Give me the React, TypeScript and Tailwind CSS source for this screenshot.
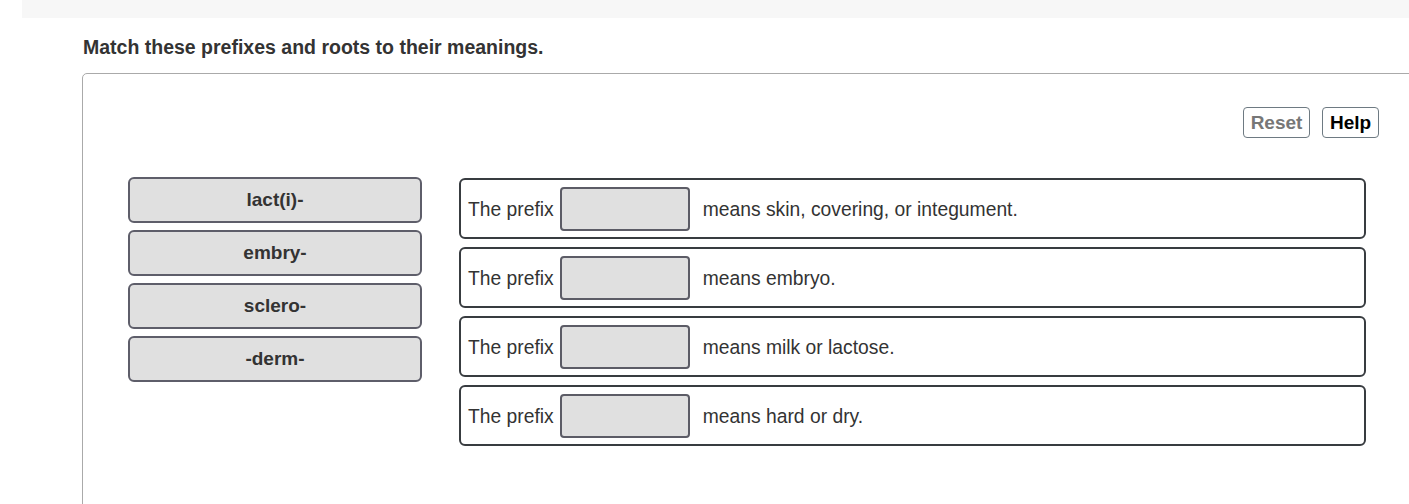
import React from "react";

const tiles = ["lact(i)-", "embry-", "sclero-", "-derm-"];
const rows = [
  "means skin, covering, or integument.",
  "means embryo.",
  "means milk or lactose.",
  "means hard or dry.",
];

export default function App() {
  return (
    <div
      className="w-[1409px] h-[504px] overflow-hidden bg-white text-[#333]"
      style={{ fontFamily: '"Liberation Sans", Arial, sans-serif' }}
    >
      <div className="ml-[22px] h-[18px] bg-[#f7f7f7]" />
      <div className="pl-[83px] mt-[18px] text-[19.5px] leading-[22px] font-bold text-[#333]">
        Match these prefixes and roots to their meanings.
      </div>
      <div className="ml-[82px] mt-[15px] w-[1360px] h-[460px] border border-[#aaaaaa] rounded-tl-[5px] rounded-tr-[5px]">
        <div className="ml-[45px] w-[1251px] pt-[33px]">
          <div className="flex justify-end gap-[12px]">
            <button className="h-[31px] w-[67px] rounded-[4px] border border-[#6e7a82] bg-white text-[19px] font-bold text-[#777] leading-none">
              Reset
            </button>
            <button className="h-[31px] w-[57px] rounded-[4px] border border-[#6e7a82] bg-white text-[19px] font-bold text-black leading-none">
              Help
            </button>
          </div>
          <div className="mt-[39px] flex gap-[37px]">
            <div className="flex flex-col gap-[7px] w-[294px] shrink-0">
              {tiles.map((t) => (
                <div
                  key={t}
                  className="h-[46px] rounded-[6px] border-2 border-[#5e5e6a] bg-[#e0e0e0] flex items-center justify-center text-[19px] font-bold text-[#333]"
                >
                  {t}
                </div>
              ))}
            </div>
            <div className="flex flex-col gap-[8px] w-[907px] shrink-0 pt-[1px]">
              {rows.map((r) => (
                <div
                  key={r}
                  className="h-[61px] rounded-[6px] border-2 border-[#383c40] bg-white flex items-center pl-[7px] text-[19.3px] text-[#333]"
                >
                  <span className="mt-[3px]">The prefix</span>
                  <div className="ml-[6px] h-[44px] w-[130px] rounded-[4px] border-2 border-[#5c5c66] bg-[#e0e0e0]" />
                  <span className="ml-[13px] mt-[3px]">{r}</span>
                </div>
              ))}
            </div>
          </div>
        </div>
      </div>
    </div>
  );
}
